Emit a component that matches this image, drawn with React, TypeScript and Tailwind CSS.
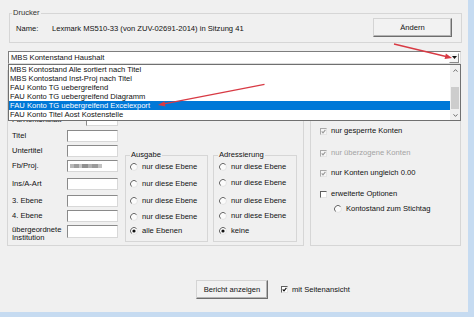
import React from "react";

const Radio = ({ checked = false }: { checked?: boolean }) => (
  <svg width="8" height="8" viewBox="0 0 8 8" className="shrink-0">
    <circle cx="4" cy="4" r="3.4" fill="#fbfbfb" stroke="#dedede" strokeWidth="0.8" />
    <path d="M1.5 6.5 A3.5 3.5 0 0 1 6.5 1.5" fill="none" stroke="#6f6f6f" strokeWidth="1" />
    {checked && <circle cx="4" cy="4" r="1.6" fill="#111111" />}
  </svg>
);

const Check = ({ checked = false, disabled = false }: { checked?: boolean; disabled?: boolean }) => (
  <span
    className={
      disabled
        ? "relative block w-[7px] h-[7px] shrink-0 border border-t-[#a9a9a9] border-l-[#a9a9a9] border-b-[#e4e4e4] border-r-[#e4e4e4] bg-[#f6f6f6]"
        : "relative block w-[7px] h-[7px] shrink-0 border border-t-[#5f5f5f] border-l-[#5f5f5f] border-b-[#e4e4e4] border-r-[#e4e4e4] bg-white"
    }
  >
    {checked && (
      <svg width="5" height="5" viewBox="0 0 5 5" className="absolute left-0 top-0">
        <path
          d="M0.7 2.4 L2 3.8 L4.4 0.9"
          fill="none"
          stroke={disabled ? "#9a9a9a" : "#111111"}
          strokeWidth="1.1"
        />
      </svg>
    )}
  </span>
);

const Field = ({ children, h = "h-[12px]" }: { children?: React.ReactNode; h?: string }) => (
  <div
    className={
      h === "h-[13px]"
        ? "w-[51px] h-[13px] bg-white border border-t-[#8a8a8a] border-l-[#8a8a8a] border-r-[#d8d8d8] border-b-[#d8d8d8] flex items-center pl-[2px]"
        : "w-[51px] h-[12px] bg-white border border-t-[#8a8a8a] border-l-[#8a8a8a] border-r-[#d8d8d8] border-b-[#d8d8d8] flex items-center pl-[2px]"
    }
  >
    {children}
  </div>
);

const listItems = [
  "MBS Kontostand Alle sortiert nach Titel",
  "MBS Kontostand Inst-Proj nach Titel",
  "FAU Konto TG uebergreifend",
  "FAU Konto TG uebergreifend Diagramm",
  "FAU Konto TG uebergreifend Excelexport",
  "FAU Konto Titel Aost Kostenstelle",
];

export default function App() {
  return (
    <div className="relative w-[474px] h-[317px] bg-[#c6dbf1] overflow-hidden font-['Liberation_Sans',Arial,sans-serif] text-[7.6px] leading-[10px] text-[#111111]">
      <div className="relative w-[468px] h-[312px] bg-[#f0f0f0] px-[7px] pt-[8px] flex flex-col">
        {/* Drucker group */}
        <fieldset className="ml-[2px] w-[453px] h-[35px] border border-[#d6d6d6]">
          <legend className="ml-[2px] px-[1px] leading-[10px] text-[#333333]">Drucker</legend>
          <div className="flex items-start h-[24px] pl-[6px] pr-[9px]">
            <span className="w-[36px] mt-[6px]">Name:</span>
            <span className="mt-[6px]">Lexmark MS510-33 (von ZUV-02691-2014) in Sitzung 41</span>
            <button className="ml-auto w-[79px] h-[19px] bg-[#f2f2f2] border border-t-[#d4d4d4] border-l-[#d4d4d4] border-r-[#6d6d6d] border-b-[#6d6d6d] shadow-[inset_-1px_-1px_0_#b4b4b4] flex items-center justify-center">
              Ändern
            </button>
          </div>
        </fieldset>

        {/* Combo box */}
        <div className="mt-[8px] ml-[1px] w-[453px] h-[13px] flex items-center bg-white border border-t-[#7e7e7e] border-l-[#7e7e7e] border-b-[#dcdcdc] border-r-[#dcdcdc]">
          <span className="pl-[2px]">MBS Kontenstand Haushalt</span>
          <div className="ml-auto mr-[1px] w-[10px] h-[10px] bg-[#f4f4f4] border border-t-[#ffffff] border-l-[#ffffff] border-r-[#8a8a8a] border-b-[#8a8a8a] flex items-center justify-center">
            <svg width="5" height="3" viewBox="0 0 5 3">
              <path d="M0 0 H5 L2.5 3 Z" fill="#111111" />
            </svg>
          </div>
        </div>

        {/* Panels */}
        <div className="mt-[6px] flex gap-[6px]">
          {/* Left panel */}
          <div className="w-[297px] h-[176px] border border-[#d6d6d6] flex pl-[4px]">
            <div className="flex flex-col w-[106px]">
              <div className="mt-[43px] h-[12px] flex items-center">
                <span className="w-[74px]">Fb/Kontenblatt</span>
                <div className="w-[32px] h-[12px] bg-white border border-t-[#8a8a8a] border-l-[#8a8a8a] border-r-[#d8d8d8] border-b-[#d8d8d8]" />
              </div>
              <div className="mt-[4px] h-[12px] flex items-center">
                <span className="w-[55px]">Titel</span>
                <Field />
              </div>
              <div className="mt-[3px] h-[12px] flex items-center">
                <span className="w-[55px]">Untertitel</span>
                <Field />
              </div>
              <div className="mt-[3px] h-[12px] flex items-center">
                <span className="w-[55px]">Fb/Proj.</span>
                <Field>
                  <div className="flex items-center blur-[0.4px]">
                    <div className="w-[4px] h-[4px] bg-[#b8b8b8]" />
                    <div className="w-[5px] h-[4px] bg-[#9c9c9c]" />
                    <div className="w-[3px] h-[4px] bg-[#c4c4c4]" />
                    <div className="w-[6px] h-[4px] bg-[#8f8f8f]" />
                    <div className="w-[4px] h-[4px] bg-[#b0b0b0]" />
                    <div className="w-[6px] h-[4px] bg-[#9a9a9a]" />
                    <div className="w-[4px] h-[4px] bg-[#c2c2c2]" />
                  </div>
                </Field>
              </div>
              <div className="mt-[6px] h-[12px] flex items-center">
                <span className="w-[55px]">Ins/A-Art</span>
                <Field />
              </div>
              <div className="mt-[5px] h-[12px] flex items-center">
                <span className="w-[55px]">3. Ebene</span>
                <Field />
              </div>
              <div className="mt-[3px] h-[12px] flex items-center">
                <span className="w-[55px]">4. Ebene</span>
                <Field />
              </div>
              <div className="mt-[3px] h-[13px] flex items-start">
                <span className="w-[55px] mt-[1px] leading-[8px]">
                  übergeordnete
                  <br />
                  Institution
                </span>
                <Field h="h-[13px]" />
              </div>
            </div>

            {/* Ausgabe */}
            <fieldset className="ml-[7px] mt-[79px] w-[83px] h-[92px] border border-[#d6d6d6]">
              <legend className="ml-[4px] px-[1px] leading-[10px]">Ausgabe</legend>
              <div className="flex flex-col pl-[4px]">
                <div className="mt-[2px] h-[10px] flex items-center gap-[4px]">
                  <Radio />
                  <span>nur diese Ebene</span>
                </div>
                <div className="mt-[7px] h-[10px] flex items-center gap-[4px]">
                  <Radio />
                  <span>nur diese Ebene</span>
                </div>
                <div className="mt-[7px] h-[10px] flex items-center gap-[4px]">
                  <Radio />
                  <span>nur diese Ebene</span>
                </div>
                <div className="mt-[6px] h-[10px] flex items-center gap-[4px]">
                  <Radio />
                  <span>nur diese Ebene</span>
                </div>
                <div className="mt-[4px] h-[10px] flex items-center gap-[4px]">
                  <Radio checked />
                  <span>alle Ebenen</span>
                </div>
              </div>
            </fieldset>

            {/* Adressierung */}
            <fieldset className="ml-[5px] mt-[79px] w-[84px] h-[92px] border border-[#d6d6d6]">
              <legend className="ml-[4px] px-[1px] leading-[10px]">Adressierung</legend>
              <div className="flex flex-col pl-[5px]">
                <div className="mt-[2px] h-[10px] flex items-center gap-[4px]">
                  <Radio />
                  <span>nur diese Ebene</span>
                </div>
                <div className="mt-[6px] h-[10px] flex items-center gap-[4px]">
                  <Radio />
                  <span>nur diese Ebene</span>
                </div>
                <div className="mt-[8px] h-[10px] flex items-center gap-[4px]">
                  <Radio />
                  <span>nur diese Ebene</span>
                </div>
                <div className="mt-[5px] h-[10px] flex items-center gap-[4px]">
                  <Radio />
                  <span>nur diese Ebene</span>
                </div>
                <div className="mt-[5px] h-[10px] flex items-center gap-[4px]">
                  <Radio checked />
                  <span>keine</span>
                </div>
              </div>
            </fieldset>
          </div>

          {/* Right panel */}
          <div className="w-[151px] h-[176px] border border-[#d6d6d6] flex flex-col pl-[9px]">
            <div className="mt-[55px] h-[10px] flex items-center gap-[4px]">
              <Check checked disabled />
              <span>nur gesperrte Konten</span>
            </div>
            <div className="mt-[12px] h-[10px] flex items-center gap-[4px]">
              <Check checked disabled />
              <span className="text-[#a3a3a3]">nur überzogene Konten</span>
            </div>
            <div className="mt-[10px] h-[10px] flex items-center gap-[4px]">
              <Check checked disabled />
              <span>nur Konten ungleich 0.00</span>
            </div>
            <div className="mt-[11px] h-[10px] flex items-center gap-[4px]">
              <Check />
              <span>erweiterte Optionen</span>
            </div>
            <div className="mt-[5px] ml-[14px] h-[10px] flex items-center gap-[4px]">
              <Radio />
              <span>Kontostand zum Stichtag</span>
            </div>
          </div>
        </div>

        {/* Bottom row */}
        <div className="mt-[34px] flex items-center">
          <button className="ml-[189px] w-[72px] h-[19px] bg-[#f2f2f2] border border-t-[#d4d4d4] border-l-[#d4d4d4] border-r-[#6d6d6d] border-b-[#6d6d6d] shadow-[inset_-1px_-1px_0_#b4b4b4] flex items-center justify-center">
            Bericht anzeigen
          </button>
          <div className="ml-[13px] flex items-center gap-[4px]">
            <Check checked />
            <span>mit Seitenansicht</span>
          </div>
        </div>

        {/* Dropdown list overlay */}
        <div className="absolute left-[8px] top-[64px] z-10 w-[453px] h-[57px] bg-white border border-[#707070] flex">
          <div className="flex-1 flex flex-col">
            {listItems.map((t, i) => (
              <div
                key={t}
                className={
                  i === 4
                    ? "h-[9px] leading-[9px] pl-[1px] bg-[#0078d7] text-white"
                    : "h-[9px] leading-[9px] pl-[1px]"
                }
              >
                {t}
              </div>
            ))}
          </div>
          <div className="w-[10px] bg-[#f0f0f0] flex flex-col">
            <div className="h-[10px] flex items-center justify-center">
              <svg width="5" height="3" viewBox="0 0 5 3">
                <path d="M0.5 2.7 L2.5 0.6 L4.5 2.7" fill="none" stroke="#606060" strokeWidth="0.9" />
              </svg>
            </div>
            <div className="mt-[12px] mx-[1px] h-[22px] bg-[#cdcdcd]" />
            <div className="mt-auto h-[10px] flex items-center justify-center">
              <svg width="5" height="3" viewBox="0 0 5 3">
                <path d="M0.5 0.3 L2.5 2.4 L4.5 0.3" fill="none" stroke="#606060" strokeWidth="0.9" />
              </svg>
            </div>
          </div>
        </div>
      </div>

      {/* Red annotation arrows */}
      <svg
        width="474"
        height="317"
        viewBox="0 0 474 317"
        className="absolute left-0 top-0 z-20 pointer-events-none"
      >
        <line x1="394" y1="44" x2="446" y2="56.5" stroke="#d83a44" strokeWidth="1.3" />
        <polygon points="452,58 445.9,53.6 444.6,59.1" fill="#d83a44" />
        <line x1="264.5" y1="84.3" x2="164" y2="103.8" stroke="#d83a44" strokeWidth="1.3" />
        <polygon points="158,105 164.5,101.2 165.5,106.4" fill="#d83a44" />
      </svg>
    </div>
  );
}
